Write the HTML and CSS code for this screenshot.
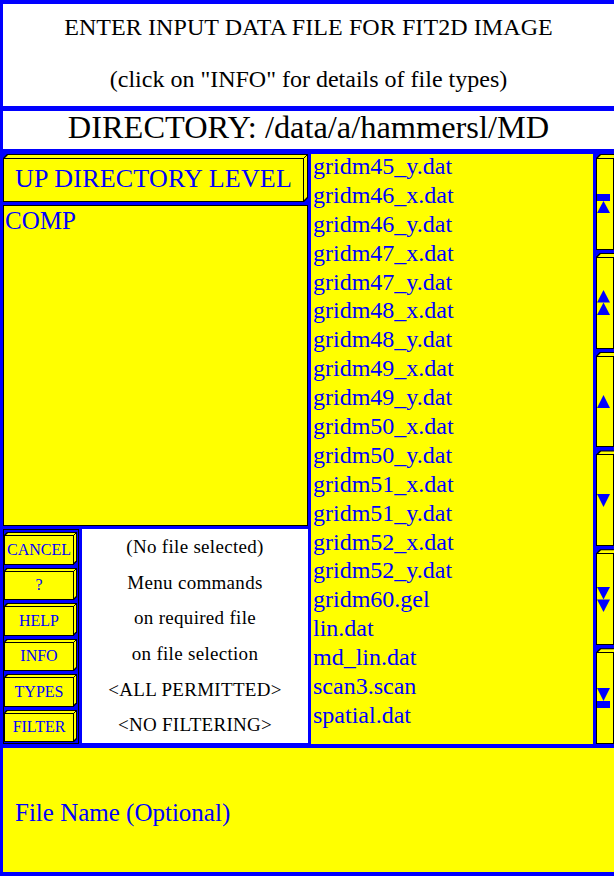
FILE: index.html
```html
<!DOCTYPE html>
<html lang="en">
<head>
<meta charset="utf-8">
<title>FIT2D file selection</title>
<link rel="stylesheet" href="styles.css">
</head>
<body>
<div class="app">
  <header class="title">
    <div class="t1">ENTER INPUT DATA FILE FOR FIT2D IMAGE</div>
    <div class="t2">(click on "INFO" for details of file types)</div>
  </header>
  <div class="dir">DIRECTORY: /data/a/hammersl/MD</div>
  <main class="main">
    <section class="left">
      <div class="b3d up"><div class="face">UP DIRECTORY LEVEL</div></div>
      <div class="dirs">COMP</div>
      <div class="cmd">
        <div class="btns">
          <div class="b3d sm"><div class="face">CANCEL</div></div>
          <div class="b3d sm"><div class="face">?</div></div>
          <div class="b3d sm"><div class="face">HELP</div></div>
          <div class="b3d sm"><div class="face">INFO</div></div>
          <div class="b3d sm"><div class="face">TYPES</div></div>
          <div class="b3d sm"><div class="face">FILTER</div></div>
        </div>
        <div class="info">
          <div>(No file selected)</div>
          <div>Menu commands</div>
          <div>on required file</div>
          <div>on file selection</div>
          <div>&lt;ALL PERMITTED&gt;</div>
          <div>&lt;NO FILTERING&gt;</div>
        </div>
      </div>
    </section>
    <ul class="files">
      <li>gridm45_y.dat</li>
      <li>gridm46_x.dat</li>
      <li>gridm46_y.dat</li>
      <li>gridm47_x.dat</li>
      <li>gridm47_y.dat</li>
      <li>gridm48_x.dat</li>
      <li>gridm48_y.dat</li>
      <li>gridm49_x.dat</li>
      <li>gridm49_y.dat</li>
      <li>gridm50_x.dat</li>
      <li>gridm50_y.dat</li>
      <li>gridm51_x.dat</li>
      <li>gridm51_y.dat</li>
      <li>gridm52_x.dat</li>
      <li>gridm52_y.dat</li>
      <li>gridm60.gel</li>
      <li>lin.dat</li>
      <li>md_lin.dat</li>
      <li>scan3.scan</li>
      <li>spatial.dat</li>
    </ul>
    <div class="scroll">
      <div class="b3d sc"><div class="face">
        <svg width="13" height="19" viewBox="0 0 13 19"><rect x="0" y="0" width="13" height="7"/><polygon points="6.5,7 13,19 0,19"/></svg>
      </div></div>
      <div class="b3d sc"><div class="face">
        <svg width="13" height="25" viewBox="0 0 13 25"><polygon points="6.5,0 13,12.5 0,12.5"/><polygon points="6.5,12.5 13,25 0,25"/></svg>
      </div></div>
      <div class="b3d sc"><div class="face">
        <svg width="13" height="13" viewBox="0 0 13 13"><polygon points="6.5,0 13,13 0,13"/></svg>
      </div></div>
      <div class="b3d sc"><div class="face">
        <svg width="13" height="13" viewBox="0 0 13 13"><polygon points="0,0 13,0 6.5,13"/></svg>
      </div></div>
      <div class="b3d sc"><div class="face">
        <svg width="13" height="25" viewBox="0 0 13 25"><polygon points="0,0 13,0 6.5,12.5"/><polygon points="0,12.5 13,12.5 6.5,25"/></svg>
      </div></div>
      <div class="b3d sc"><div class="face">
        <svg width="13" height="20" viewBox="0 0 13 20"><polygon points="0,0 13,0 6.5,13"/><rect x="0" y="13" width="13" height="7"/></svg>
      </div></div>
    </div>
  </main>
  <div class="fname">File Name (Optional)</div>
</div>
</body>
</html>
```

FILE: styles.css
```css
* { box-sizing: border-box; }

html, body {
  margin: 0;
  width: 614px;
  height: 876px;
  overflow: hidden;
  background: #0000ff;
}

body {
  font-family: "Liberation Serif", "Times New Roman", serif;
  color: #000;
}

.app {
  width: 614px;
  height: 876px;
  padding: 4px 0 4px 3px;
  display: flex;
  flex-direction: column;
}

/* header panels */
.title {
  height: 102px;
  flex: none;
  background: #fff;
  padding-top: 9px;
  text-align: center;
  font-size: 24px;
  line-height: 28px;
  white-space: nowrap;
}
.t1 { letter-spacing: 0.08px; }
.t2 { margin-top: 24px; }

.dir {
  margin-top: 5px;
  height: 38px;
  flex: none;
  background: #fff;
  text-align: center;
  font-size: 32.4px;
  line-height: 32px;
  white-space: nowrap;
}

/* main area */
.main {
  margin-top: 5px;
  height: 590px;
  flex: none;
  display: grid;
  grid-template-columns: 305px 282px 18px;
  column-gap: 3px;
}

.left {
  display: flex;
  flex-direction: column;
  gap: 3px;
  min-height: 0;
}

/* 3D bevelled button */
.b3d {
  --d: 4px;
  position: relative;
  display: flex;
  flex-direction: column;
  padding: var(--d) var(--d) 0 0;
}
.b3d::before,
.b3d::after {
  content: "";
  position: absolute;
  clip-path: polygon(var(--d) 0, 100% 0, 100% calc(100% - var(--d)), calc(100% - var(--d)) 100%, 0 100%, 0 var(--d));
}
.b3d::before {
  inset: 0;
  background: #000;
}
.b3d::after {
  inset: 1px;
  background: #ffff00;
}
.b3d .face {
  position: relative;
  z-index: 1;
  flex: 1;
  background: #ffff00;
  border: 1px solid #000;
  color: #0000ff;
}
.b3d .face::after {
  content: "";
  position: absolute;
  right: calc(-1px - var(--d));
  top: calc(-1px - var(--d));
  width: calc(var(--d) + 1px);
  height: calc(var(--d) + 1px);
  background: linear-gradient(to bottom right, transparent calc(50% - 0.6px), #000 calc(50% - 0.6px), #000 calc(50% + 0.6px), transparent calc(50% + 0.6px));
}

.up {
  height: 48px;
  flex: none;
}
.up .face {
  font-size: 26px;
  line-height: 36px;
  padding-top: 2px;
  padding-bottom: 4px;
  text-align: center;
  white-space: nowrap;
  letter-spacing: 0.2px;
}

.dirs {
  height: 321px;
  flex: none;
  background: #ffff00;
  border: 1px solid #000;
  color: #0000ff;
  font-size: 25px;
  line-height: 26px;
  padding: 2px 0 0 1px;
}

.cmd {
  flex: 1;
  display: flex;
  gap: 3px;
  min-height: 0;
}

.btns {
  width: 76px;
  flex: none;
  border: 1px solid #000;
  background: #0000ff;
  padding: 2px 1px 1px 0;
  display: flex;
  flex-direction: column;
  gap: 3px;
}
.sm {
  --d: 3px;
  flex: 1;
}
.sm .face {
  display: flex;
  align-items: center;
  justify-content: center;
  font-size: 16px;
}

.info {
  flex: 1;
  background: #fff;
  display: flex;
  flex-direction: column;
  margin-bottom: 1px;
}
.info div {
  flex: 1;
  display: flex;
  align-items: center;
  justify-content: center;
  font-size: 19px;
  letter-spacing: 0.3px;
  white-space: nowrap;
}

/* file list */
.files {
  list-style: none;
  margin: 0;
  padding: 0 0 0 2px;
  background: #ffff00;
  color: #0000ff;
  font-size: 24px;
  overflow: hidden;
  white-space: nowrap;
}
.files li {
  line-height: 24px;
  padding-bottom: 4.9px;
}

/* scroll buttons */
.scroll {
  width: 22px;
  display: flex;
  flex-direction: column;
  gap: 3px;
}
.sc {
  flex: 1;
}
.sc .face {
  display: flex;
  align-items: center;
  justify-content: flex-start;
}
.sc svg {
  display: block;
  fill: #0000ff;
}

/* file name input */
.fname {
  margin-top: 4px;
  flex: 1;
  background: #ffff00;
  color: #0000ff;
  font-size: 25px;
  display: flex;
  align-items: center;
  padding: 5px 0 0 12px;
}
```
